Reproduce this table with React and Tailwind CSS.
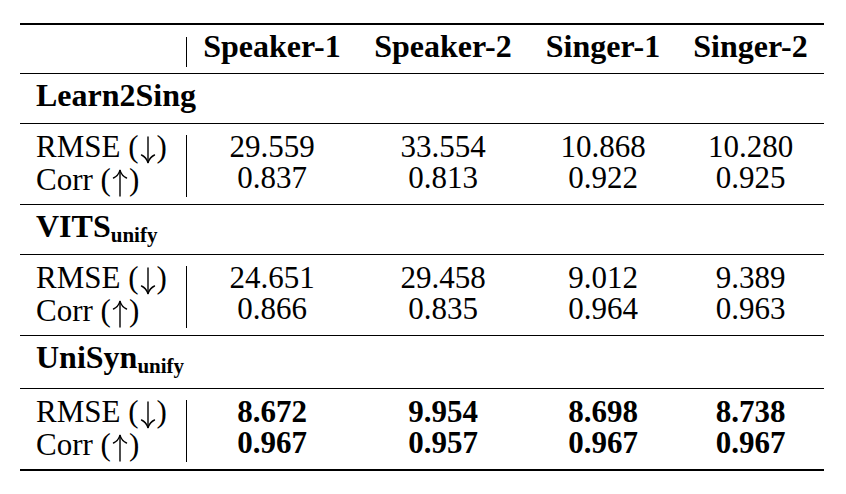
import React from "react";

const cols = "grid grid-cols-[167px_170px_172px_148px_147px]";

function Arrow({ up }) {
  return (
    <svg
      viewBox="0 0 16 28"
      className={`mx-[1px] inline-block h-[28px] w-[16px] align-[-7px] ${up ? "rotate-180" : ""}`}
      fill="none"
      stroke="black"
      strokeWidth="1.4"
      strokeLinecap="round"
    >
      <path d="M8 1 L8 26" />
      <path d="M1.5 19 Q6 21 8 26.5" />
      <path d="M14.5 19 Q10 21 8 26.5" />
    </svg>
  );
}

function Rule({ thick }) {
  return <div className={thick ? "h-[2px] bg-black" : "h-px bg-black"} />;
}

function Header() {
  const heads = ["Speaker-1", "Speaker-2", "Singer-1", "Singer-2"];
  return (
    <div className={`${cols} h-[48px]`}>
      <div className="flex justify-end">
        <div className="mt-[12px] h-[30px] w-px bg-black" />
      </div>
      {heads.map((h) => (
        <div key={h} className="pt-[5px] text-center text-[32px] font-bold leading-[32px]">
          {h}
        </div>
      ))}
    </div>
  );
}

function Group({ name, sub, h }) {
  return (
    <div className={`${h} pl-[16px] pt-[5px] text-[32px] font-bold leading-[32px]`}>
      {name}
      {sub && <span className="align-[-5px] text-[21px]">{sub}</span>}
    </div>
  );
}

function Data({ rmse, corr, bold }) {
  return (
    <div className={`${cols} h-[80px]`}>
      <div className="flex justify-between pl-[16px]">
        <div className="pt-[7px] text-[31px] leading-[31px]">
          <div>
            RMSE (<Arrow />)
          </div>
          <div>
            Corr (<Arrow up />)
          </div>
        </div>
        <div className="mb-[7px] mt-[11px] w-px bg-black" />
      </div>
      {rmse.map((v, i) => (
        <div
          key={i}
          className={`pt-[7px] text-center text-[31px] leading-[31px] ${bold ? "font-bold" : ""}`}
        >
          <div>{v}</div>
          <div>{corr[i]}</div>
        </div>
      ))}
    </div>
  );
}

export default function App() {
  return (
    <div className="h-[494px] w-[846px] overflow-hidden bg-white pt-[23px] font-['Liberation_Serif','Times_New_Roman',serif] text-black">
      <div className="ml-[20px] w-[804px]">
        <Rule thick />
        <Header />
        <Rule />
        <Group name="Learn2Sing" h="h-[49px]" />
        <Rule />
        <Data rmse={["29.559", "33.554", "10.868", "10.280"]} corr={["0.837", "0.813", "0.922", "0.925"]} />
        <Rule />
        <Group name="VITS" sub="unify" h="h-[49px]" />
        <Rule />
        <Data rmse={["24.651", "29.458", "9.012", "9.389"]} corr={["0.866", "0.835", "0.964", "0.963"]} />
        <Rule />
        <Group name="UniSyn" sub="unify" h="h-[52px]" />
        <Rule />
        <Data rmse={["8.672", "9.954", "8.698", "8.738"]} corr={["0.967", "0.957", "0.967", "0.967"]} bold />
        <Rule thick />
      </div>
    </div>
  );
}
